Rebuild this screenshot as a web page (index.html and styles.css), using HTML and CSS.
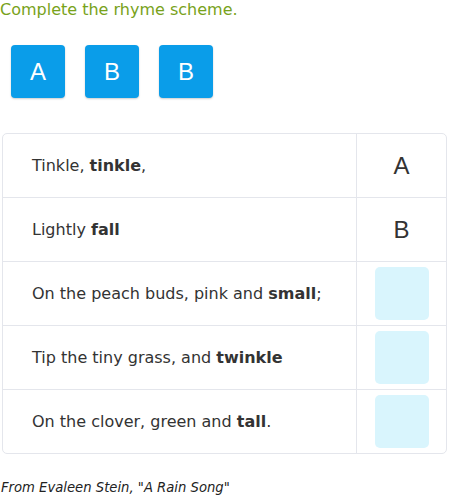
FILE: index.html
```html
<!DOCTYPE html>
<html>
<head>
<meta charset="utf-8">
<link rel="stylesheet" href="styles.css">
</head>
<body>
<div class="title">Complete the rhyme scheme.</div>
<div class="tiles">
  <div class="tile">A</div>
  <div class="tile">B</div>
  <div class="tile">B</div>
</div>
<div class="table">
  <div class="row">
    <div class="line"><span>Tinkle, <b>tinkle</b>,</span></div>
    <div class="cell"><span class="letter">A</span></div>
  </div>
  <div class="row">
    <div class="line"><span>Lightly <b>fall</b></span></div>
    <div class="cell"><span class="letter">B</span></div>
  </div>
  <div class="row">
    <div class="line"><span>On the peach buds, pink and <b>small</b>;</span></div>
    <div class="cell"><span class="slot"></span></div>
  </div>
  <div class="row">
    <div class="line"><span>Tip the tiny grass, and <b>twinkle</b></span></div>
    <div class="cell"><span class="slot"></span></div>
  </div>
  <div class="row">
    <div class="line"><span>On the clover, green and <b>tall</b>.</span></div>
    <div class="cell"><span class="slot"></span></div>
  </div>
</div>
<div class="source">From Evaleen Stein, "A Rain Song"</div>
</body>
</html>
```
FILE: styles.css
```css
html, body {
  margin: 0;
  padding: 0;
  background: #fff;
}
body {
  font-family: "DejaVu Sans", Verdana, sans-serif;
  color: #333;
}
.title {
  color: #78a21a;
  font-size: 16px;
  line-height: 18px;
  padding-top: 1px;
}
.tiles {
  display: flex;
  gap: 20px;
  margin: 26px 0 0 11px;
}
.tile {
  width: 54px;
  height: 53px;
  background: #0a9de9;
  border-radius: 4px;
  box-shadow: 0 1px 2px rgba(0,0,0,0.2);
  color: #fff;
  font-family: "Liberation Sans", Arial, sans-serif;
  font-size: 24px;
  display: flex;
  align-items: center;
  justify-content: center;
}
.table {
  margin: 35px 0 0 2px;
  width: 445px;
  border: 1px solid #e4e6ec;
  border-radius: 5px;
  box-sizing: border-box;
}
.row {
  display: flex;
  height: 64px;
  box-sizing: border-box;
  border-top: 1px solid #e4e6ec;
}
.row:first-child {
  border-top: none;
  height: 63px;
}
.line {
  width: 354px;
  border-right: 1px solid #e4e6ec;
  display: flex;
  align-items: center;
  padding-left: 29px;
  font-size: 16px;
  box-sizing: border-box;
}
.line b {
  font-weight: bold;
}
.cell {
  flex: 1;
  display: flex;
  align-items: center;
  justify-content: center;
}
.letter {
  font-family: "Liberation Sans", Arial, sans-serif;
  font-size: 24px;
  color: #333;
}
.slot {
  width: 54px;
  height: 53px;
  border-radius: 5px;
  background: #d9f5fd;
}
.source {
  margin: 26px 0 0 1px;
  font-size: 13.2px;
  font-style: italic;
  color: #222;
}
```
